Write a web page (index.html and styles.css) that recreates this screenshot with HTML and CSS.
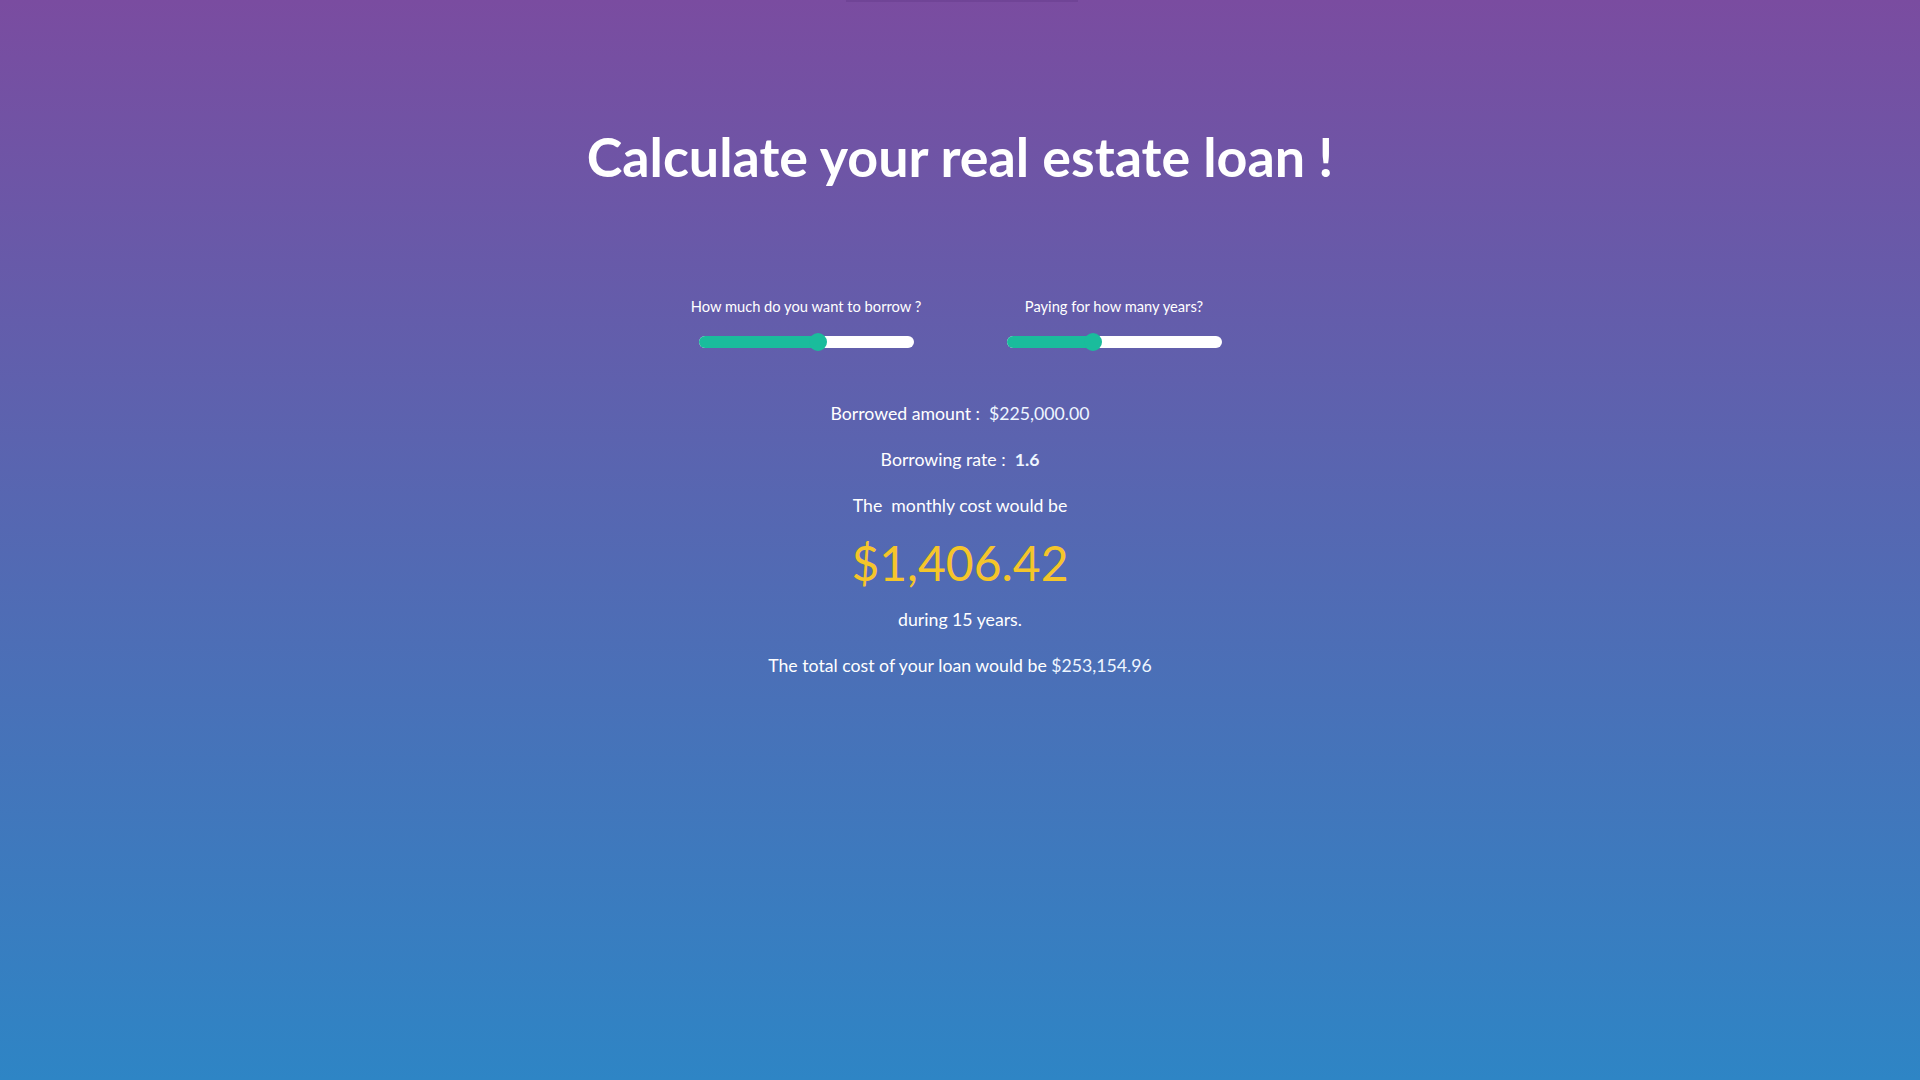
FILE: index.html
```html
<!DOCTYPE html>
<html lang="en">
<head>
<meta charset="utf-8">
<title>Real estate loan calculator</title>
<link rel="stylesheet" href="styles.css">
</head>
<body>
<div class="top-shadow"></div>
<main class="page">
  <h1 class="title">Calculate your real estate loan !</h1>
  <section class="controls">
    <div class="control">
      <label class="control-label">How much do you want to borrow ?</label>
      <div class="track" role="slider" aria-valuenow="225000">
        <div class="fill" style="width:119px"></div>
        <div class="thumb" style="left:110px"></div>
      </div>
    </div>
    <div class="control">
      <label class="control-label">Paying for how many years?</label>
      <div class="track" role="slider" aria-valuenow="15">
        <div class="fill" style="width:86px"></div>
        <div class="thumb" style="left:77px"></div>
      </div>
    </div>
  </section>
  <section class="results">
    <p class="line">Borrowed amount :&nbsp; <span class="value">$225,000.00</span></p>
    <p class="line">Borrowing rate :&nbsp; <strong class="value">1.6</strong></p>
    <p class="line">The&nbsp; monthly cost would be</p>
    <p class="big">$1,406.42</p>
    <p class="line">during 15 years.</p>
    <p class="line">The total cost of your loan would be <span class="value">$253,154.96</span></p>
  </section>
</main>
</body>
</html>
```
FILE: styles.css
```css
html, body {
  margin: 0;
  padding: 0;
  height: 100%;
}
body {
  min-height: 100vh;
  background: linear-gradient(180deg, #7a4ca0 0%, #2e85c5 100%);
  font-family: Lato, "Open Sans", sans-serif;
  color: #ffffff;
  overflow: hidden;
  position: relative;
}
.top-shadow {
  position: absolute;
  top: 0;
  left: 846px;
  width: 232px;
  height: 2px;
  background: rgba(40, 20, 80, 0.12);
}
.page {
  display: flex;
  flex-direction: column;
  align-items: center;
  padding-top: 124px;
}
.title {
  margin: 0;
  font-size: 53.8px;
  line-height: 64px;
  font-weight: 700;
  color: #ffffff;
}
.controls {
  display: flex;
  gap: 78px;
  margin-top: 109px;
}
.control {
  width: 230px;
  display: flex;
  flex-direction: column;
  align-items: center;
}
.control-label {
  font-size: 14.7px;
  line-height: 18px;
  white-space: nowrap;
}
.track {
  position: relative;
  width: 215px;
  height: 12px;
  margin-top: 21px;
  border-radius: 6px;
  background: #ffffff;
}
.fill {
  height: 12px;
  border-radius: 6px;
  background: #1abc9c;
}
.thumb {
  position: absolute;
  top: -3px;
  width: 18px;
  height: 18px;
  border-radius: 50%;
  background: #1abc9c;
}
.results {
  display: flex;
  flex-direction: column;
  align-items: center;
  gap: 24px;
  margin-top: 55px;
}
.line {
  margin: 0;
  font-size: 17.7px;
  line-height: 22px;
  white-space: nowrap;
}
.value {
  color: #eef6ff;
}
strong.value {
  font-weight: 700;
}
.big {
  margin: -3px 0 -3px;
  font-size: 48px;
  line-height: 50px;
  color: #f5c52a;
}
```
